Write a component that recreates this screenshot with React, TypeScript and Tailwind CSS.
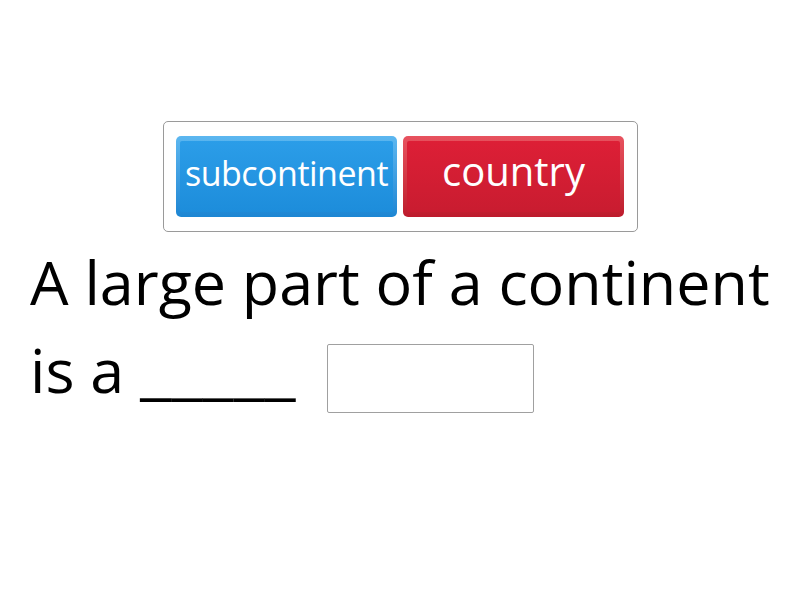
import React from 'react'

const font = { fontFamily: '"Open Sans", "Noto Sans", sans-serif' }

const Tile: React.FC<{ label: string; color: 'blue' | 'red'; size: string }> = ({ label, color, size }) => {
    const outer = color === 'blue'
        ? 'from-[#5cb7f0] to-[#1c86d3]'
        : 'from-[#e8525f] to-[#bd1a2c]'
    const inner = color === 'blue'
        ? 'from-[#2b9de8] to-[#1d8ddb]'
        : 'from-[#dd1f36] to-[#c91c30]'
    return (
        <div className={`w-[221px] h-[81px] rounded-[5px] bg-gradient-to-b ${outer} px-[4px] pt-[5px] pb-[5px]`}>
            <div className={`h-full w-full rounded-[2px] bg-gradient-to-b ${inner} flex items-center justify-center text-white font-medium ${size}`}>
                {label}
            </div>
        </div>
    )
}

export default function App() {
    return (
        <div className="w-[800px] h-[600px] bg-white flex flex-col items-center" style={font}>
            <div className="mt-[121px] w-[475px] h-[111px] border border-[#9a9a9a] rounded-[5px] flex items-center justify-center gap-[6px]">
                <Tile label="subcontinent" color="blue" size="text-[34px] tracking-[-0.5px] pb-[6px]" />
                <Tile label="country" color="red" size="text-[40px] pb-[12px]" />
            </div>
            <div className="w-full pl-[30px] pt-[6px] text-black text-[61px] leading-[88px]">
                <div>A large part of a continent</div>
                <div className="flex items-center">
                    <span>is a <span className="inline-block origin-left scale-x-[1.165]">_____</span></span>
                    <span className="ml-[53px] mt-[16px] inline-block w-[207px] h-[69px] border border-[#a0a0a0] rounded-[2px]"></span>
                </div>
            </div>
        </div>
    )
}
